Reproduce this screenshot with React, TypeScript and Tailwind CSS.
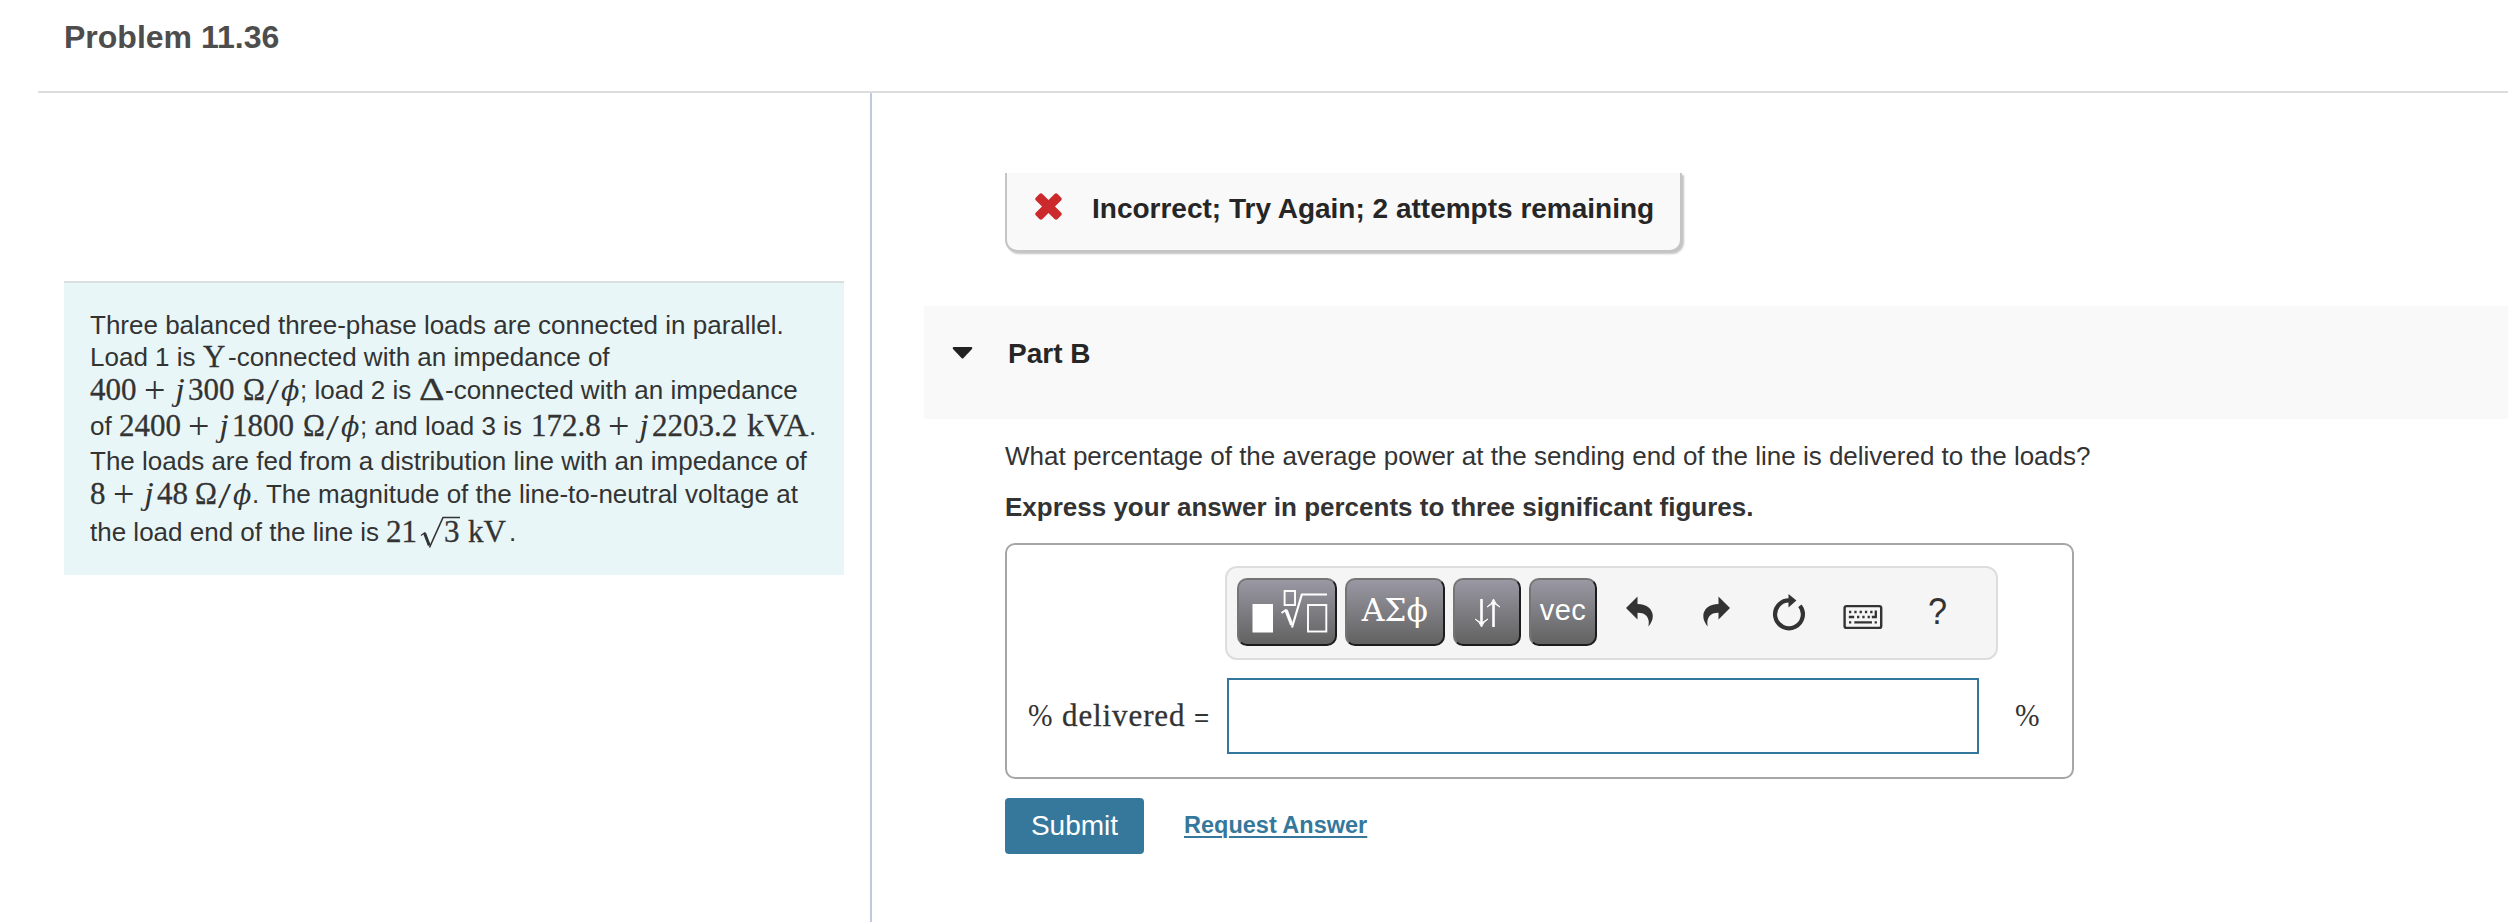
import React from "react";

type SegProps = { w: number; children?: React.ReactNode; math?: boolean; className?: string };

function Seg({ w, children, math, className = "" }: SegProps) {
  return (
    <span
      className={`inline-block whitespace-pre ${
        math ? "relative top-px font-['Liberation_Serif',serif] text-[31px] leading-0 [-webkit-text-stroke:0.3px]" : ""
      } ${className}`}
      style={{ width: w }}
    >
      {children}
    </span>
  );
}

function Line({ h, children }: { h: number; children: React.ReactNode }) {
  return (
    <div className="flex items-baseline whitespace-pre" style={{ height: h }}>
      {children}
    </div>
  );
}

const PlusJ = () => (
  <>
    <Seg w={28} math>
      <span className="relative top-[3px] text-[38px] [-webkit-text-stroke:0px]">+</span>
    </Seg>
    <Seg w={16} math>
      <span className="inline-block origin-right scale-x-[1.1] pl-[4px] italic [-webkit-text-stroke:0px]">j</span>
    </Seg>
  </>
);

const OhmPerPhase = () => (
  <>
    <Seg w={23} math>
      <span className="inline-block origin-left scale-x-[0.95]">Ω</span>
    </Seg>
    <Seg w={15} math>
      <span className="relative top-[4px] inline-block origin-left scale-x-[1.3] text-[36px] [-webkit-text-stroke:0px]">/</span>
    </Seg>
    <Seg w={19} math>
      <span className="font-['DejaVu_Serif',serif] text-[27px] italic [-webkit-text-stroke:0px]">ϕ</span>
    </Seg>
  </>
);

function ProblemText() {
  return (
    <section className="h-[294px] w-[780px] border-t-2 border-[#dcdfdf] bg-[#e8f6f7] pl-[26px] pt-[24px] text-[26px] leading-[36px] text-[#333]">
      <Line h={32}>Three balanced three-phase loads are connected in parallel.</Line>
      <Line h={33}>
        <Seg w={113}>Load 1 is</Seg>
        <Seg w={25} math>Y</Seg>
        <Seg w={400}>-connected with an impedance of</Seg>
      </Line>
      <Line h={36}>
        <Seg w={54} math>400</Seg>
        <PlusJ />
        <Seg w={55} math>300</Seg>
        <OhmPerPhase />
        <Seg w={119}>; load 2 is</Seg>
        <Seg w={26} math>
          <span className="inline-block origin-left scale-x-[1.28]">Δ</span>
        </Seg>
        <Seg w={380}>-connected with an impedance</Seg>
      </Line>
      <Line h={35}>
        <Seg w={29}>of</Seg>
        <Seg w={69} math>2400</Seg>
        <PlusJ />
        <Seg w={71} math>1800</Seg>
        <OhmPerPhase />
        <Seg w={171}>; and load 3 is</Seg>
        <Seg w={77} math>172.8</Seg>
        <PlusJ />
        <Seg w={95} math>2203.2</Seg>
        <Seg w={62} math>
          <span className="inline-block origin-left scale-x-[1.09]">kVA</span>
        </Seg>
        <Seg w={10}>.</Seg>
      </Line>
      <Line h={33}>The loads are fed from a distribution line with an impedance of</Line>
      <Line h={38}>
        <Seg w={23} math>8</Seg>
        <PlusJ />
        <Seg w={38} math>48</Seg>
        <OhmPerPhase />
        <Seg w={540}>. The magnitude of the line-to-neutral voltage at</Seg>
      </Line>
      <Line h={36}>
        <Seg w={296}>the load end of the line is</Seg>
        <Seg w={33} math>21</Seg>
        <Seg w={25} math>
          <svg className="absolute -top-[27px] left-0 h-[36px] w-[42px]" viewBox="0 0 42 36" fill="none" stroke="#333">
            <path d="M2 20.500 L6 17.500" strokeWidth="1.200" />
            <path d="M5.500 18 L10.300 30.500" strokeWidth="3" />
            <path d="M10.500 32.500 L24 2.500 H41" strokeWidth="1.600" />
          </svg>
        </Seg>
        <Seg w={24} math>3</Seg>
        <Seg w={41} math>kV</Seg>
        <Seg w={10}>.</Seg>
      </Line>
    </section>
  );
}

const keyClass =
  "flex h-[68px] items-center justify-center rounded-[10px] border-2 border-t-[#757575] border-l-[#757575] border-r-[#1c1c1c] border-b-[#1c1c1c] bg-linear-to-b from-[#9a98a3] to-[#626262] text-white";

function Toolbar() {
  return (
    <div className="flex h-[94px] w-[773px] gap-2 rounded-[12px] border-2 border-[#ddd] bg-[#f5f5f5] pl-[10px] pt-[10px]">
      <button className={`${keyClass} w-[100px]`}>
        <svg className="h-[64px] w-[96px]" viewBox="0 0 96 64" fill="none" stroke="white">
          <rect x="13.500" y="24" width="20.500" height="28.500" fill="white" stroke="none" />
          <rect x="45.600" y="11" width="10.400" height="14" strokeWidth="1.900" />
          <path d="M42.500 33 L47.500 29.500" strokeWidth="2" />
          <path d="M47 30 L52.800 45" strokeWidth="3.400" />
          <path d="M53 47.500 L62.800 14.500 H88" strokeWidth="2.200" />
          <rect x="69" y="25" width="18.300" height="26.500" strokeWidth="1.900" />
        </svg>
      </button>
      <button className={`${keyClass} w-[100px] pb-[5px] font-['DejaVu_Serif',serif] text-[32px]`}>
        <span className="flex origin-center scale-x-[0.98]">ΑΣϕ</span>
      </button>
      <button className={`${keyClass} w-[68px]`}>
        <svg className="h-[64px] w-[64px]" viewBox="0 0 64 64" fill="none" stroke="white">
          <path d="M26.500 19 V44" strokeWidth="2.600" />
          <path d="M38.500 47 V22" strokeWidth="2.600" />
          <path d="M20 39 Q25 42 26.500 47 Q28 42 33 39 L26.500 43 Z" strokeWidth="1" fill="white" />
          <path d="M32 27 Q37 24 38.500 19 Q40 24 45 27 L38.500 23 Z" strokeWidth="1" fill="white" />
        </svg>
      </button>
      <button className={`${keyClass} w-[68px] pb-[3px] text-[29px] tracking-[0.4px]`}>vec</button>
      <svg className="ml-[13px] h-[70px] w-[300px] text-[#333]" viewBox="0 0 300 70" fill="currentColor">
        <path d="M8 30 L19.500 18.500 V26 C29 26 34.800 31.500 34.800 38 Q34.800 43 30.500 48.500 Q32.500 34.700 19.500 34.700 V41.500 Z" />
        <path d="M112 30 L100.500 18.500 V26 C91 26 85.300 31.500 85.300 38 Q85.300 43 89.600 48.500 Q87.600 34.700 100.500 34.700 V41.500 Z" />
        <path d="M171 22.400 A13.900 13.900 0 1 0 181.900 27.700" fill="none" stroke="currentColor" strokeWidth="4.200" />
        <path d="M170.500 16 L178.400 22.600 L170.500 29.500 Z" />
        <rect x="226.600" y="28.100" width="36.600" height="21.800" rx="2" fill="none" stroke="currentColor" strokeWidth="2.400" />
        <g fill="none" stroke="currentColor" strokeWidth="2.300">
          <path d="M231 34 h2.300 m3 0 h2.300 m3 0 h2.300 m3 0 h2.300 m3 0 h2.300" />
          <path d="M230.800 39 h5.400 m2.800 0 h2.300 m3 0 h2.300 m3 0 h2.300" />
          <path d="M257.800 32.600 V39 H253.800" />
          <path d="M231 44.300 h2.300 m3 0 h17.700 m2.600 0 h2.300" />
        </g>
      </svg>
      <span className="ml-[2px] h-[68px] origin-left scale-x-[0.95] text-[36px] leading-[68px]">?</span>
    </div>
  );
}

export default function App() {
  return (
    <div className="h-[922px] w-[2508px] overflow-hidden bg-white font-['Liberation_Sans',Arial,sans-serif] text-[#333]">
      <header className="ml-[38px] h-[93px] border-b-2 border-[#ddd] pl-[26px] pt-[18px]">
        <h1 className="text-[32px] font-bold leading-[38px] text-[#4d4d4d]">Problem 11.36</h1>
      </header>
      <main className="flex h-[829px]">
        <aside className="w-[872px] border-r-2 border-[#bccbe0] pl-16 pt-[188px]">
          <ProblemText />
        </aside>
        <div className="flex-1 pt-20">
          <div className="ml-[133px] flex h-[79px] w-[677px] items-start rounded-b-[12px] border-2 border-t-0 border-[#c4c4c4] bg-[#f9f9f9] pl-7 pt-5 shadow-[2px_2px_2px_#c4c4c4]">
            <svg className="h-[27px] w-[27px]" viewBox="0 0 27 27" fill="#cb292c">
              <rect x="-1.800" y="8.900" width="30.600" height="9.200" rx="2.200" transform="rotate(45 13.500 13.500)" />
              <rect x="-1.800" y="8.900" width="30.600" height="9.200" rx="2.200" transform="rotate(-45 13.500 13.500)" />
            </svg>
            <strong className="ml-[30px] whitespace-nowrap text-[28px] leading-[32px] text-[#262626]">
              Incorrect; Try Again; 2 attempts remaining
            </strong>
          </div>
          <div className="ml-[52px] mt-[54px] flex h-[113px] items-center bg-[#f9f9f9] pb-[20px] pl-[28px]">
            <svg className="h-[12px] w-[21px]" viewBox="0 0 21 12" fill="#222">
              <path d="M1.500 0 H19.500 Q21 0.500 20 2 L11.500 11 Q10.500 12 9.500 11 L1 2 Q0 0.500 1.500 0 Z" />
            </svg>
            <h2 className="ml-[35px] pt-[2px] text-[28px] font-bold leading-[32px] text-[#262626]">Part B</h2>
          </div>
          <div className="ml-[133px] pt-[22px]">
            <p className="text-[26px] leading-[30px]">
              What percentage of the average power at the sending end of the line is delivered to the loads?
            </p>
            <p className="mt-[21px] text-[26px] font-bold leading-[30px]">
              Express your answer in percents to three significant figures.
            </p>
            <div className="mt-[21px] h-[236px] w-[1069px] rounded-[10px] border-2 border-[#a6a6a6] pt-[21px]">
              <div className="pl-[218px]">
                <Toolbar />
              </div>
              <div className="mt-[18px] flex h-[76px] items-center">
                <label className="flex w-[220px] items-baseline pl-[21px] font-['Liberation_Serif',serif] text-[31px]">
                  <Seg w={34}>
                    <span className="inline-block origin-left scale-x-[0.95]">%</span>
                  </Seg>
                  <Seg w={132} className="tracking-[0.9px] [-webkit-text-stroke:0.3px]">
                    delivered
                  </Seg>
                  <span className="font-['Liberation_Sans',sans-serif] text-[26px]">=</span>
                </label>
                <input className="h-[76px] w-[752px] border-2 border-[#33789c] bg-white outline-none" />
                <span className="ml-[36px] inline-block origin-left scale-x-[0.95] font-['Liberation_Serif',serif] text-[31px]">%</span>
              </div>
            </div>
            <div className="mt-[19px] flex items-center">
              <button className="h-[56px] w-[139px] rounded-[4px] bg-[#36789b] text-[28px] text-white">Submit</button>
              <a className="ml-10 text-[23.5px] font-bold text-[#36789b] underline decoration-2 underline-offset-[3px]">
                Request Answer
              </a>
            </div>
          </div>
        </div>
      </main>
    </div>
  );
}
